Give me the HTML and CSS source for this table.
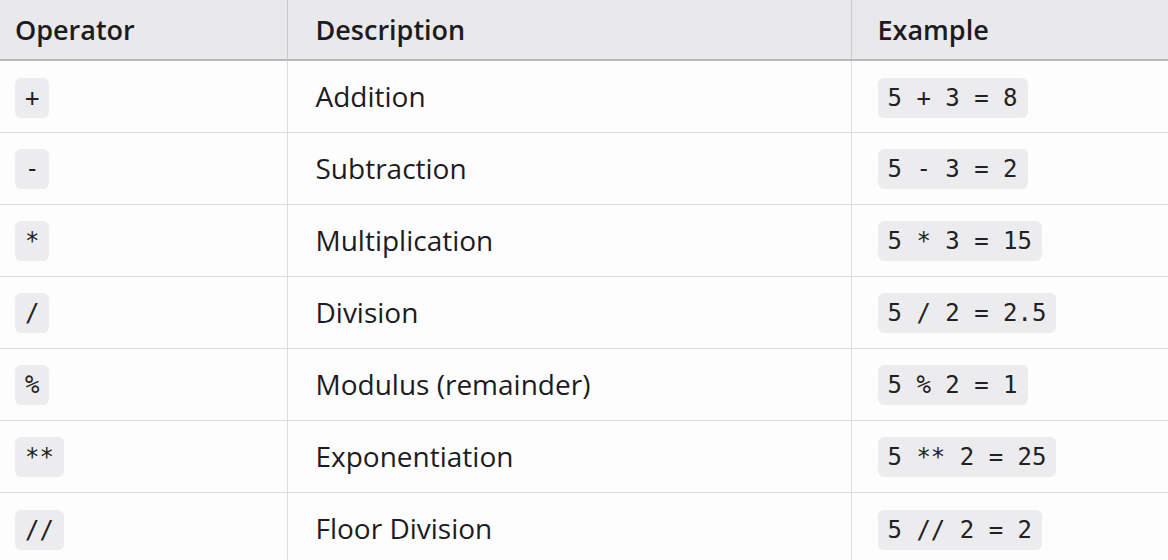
FILE: index.html
```html
<!DOCTYPE html>
<html lang="en">
<head>
    <meta charset="UTF-8">
    <meta name="viewport" content="width=device-width, initial-scale=1.0">
    <title>Python Arithmetic Operators</title>
    <link rel="stylesheet" href="styles.css">
</head>
<body>
    <table class="ops-table">
        <thead>
            <tr>
                <th class="col-op">Operator</th>
                <th class="col-desc">Description</th>
                <th class="col-ex">Example</th>
            </tr>
        </thead>
        <tbody>
            <tr>
                <td class="col-op"><code>+</code></td>
                <td class="col-desc">Addition</td>
                <td class="col-ex"><code>5 + 3 = 8</code></td>
            </tr>
            <tr>
                <td class="col-op"><code>-</code></td>
                <td class="col-desc">Subtraction</td>
                <td class="col-ex"><code>5 - 3 = 2</code></td>
            </tr>
            <tr>
                <td class="col-op"><code>*</code></td>
                <td class="col-desc">Multiplication</td>
                <td class="col-ex"><code>5 * 3 = 15</code></td>
            </tr>
            <tr>
                <td class="col-op"><code>/</code></td>
                <td class="col-desc">Division</td>
                <td class="col-ex"><code>5 / 2 = 2.5</code></td>
            </tr>
            <tr>
                <td class="col-op"><code>%</code></td>
                <td class="col-desc">Modulus (remainder)</td>
                <td class="col-ex"><code>5 % 2 = 1</code></td>
            </tr>
            <tr>
                <td class="col-op"><code>**</code></td>
                <td class="col-desc">Exponentiation</td>
                <td class="col-ex"><code>5 ** 2 = 25</code></td>
            </tr>
            <tr>
                <td class="col-op"><code>//</code></td>
                <td class="col-desc">Floor Division</td>
                <td class="col-ex"><code>5 // 2 = 2</code></td>
            </tr>
        </tbody>
    </table>
</body>
</html>
```

FILE: styles.css
```css
:root {
    --header-bg: #e9e9eb;
    --row-bg: #fdfdfe;
    --text-color: #1c1c1e;
    --line-color: #d9dde2;
    --header-line: #b9babc;
    --code-bg: #ececee;
}

* {
    margin: 0;
    padding: 0;
    box-sizing: border-box;
}

body {
    background-color: var(--row-bg);
    color: var(--text-color);
    font-family: 'Open Sans', 'Noto Sans', Arial, sans-serif;
}

.ops-table {
    width: 1168px;
    border-collapse: collapse;
    table-layout: fixed;
}

.ops-table th,
.ops-table td {
    text-align: left;
    vertical-align: middle;
    padding: 0 28px;
    border-right: 1px solid var(--line-color);
}

.ops-table th:last-child,
.ops-table td:last-child {
    border-right: none;
}

.ops-table th {
    height: 60px;
    background-color: var(--header-bg);
    font-size: 27px;
    font-weight: 600;
    border-bottom: 2px solid var(--header-line);
    border-right-color: #c9cacc;
}

.ops-table td {
    height: 72px;
    font-size: 28px;
    font-weight: 400;
    border-bottom: 1px solid var(--line-color);
}

.ops-table tbody tr:last-child td {
    border-bottom: none;
}

.col-op {
    width: 287px;
}

.ops-table .col-op {
    padding-left: 15px;
}

.col-desc {
    width: 564px;
}

.ops-table .col-ex {
    padding-left: 26px;
}

code {
    display: inline-block;
    vertical-align: middle;
    padding: 7px 10px;
    border-radius: 6px;
    background-color: var(--code-bg);
    font-family: 'DejaVu Sans Mono', 'Liberation Mono', monospace;
    font-size: 24px;
    line-height: 26px;
    color: #222;
}
```
